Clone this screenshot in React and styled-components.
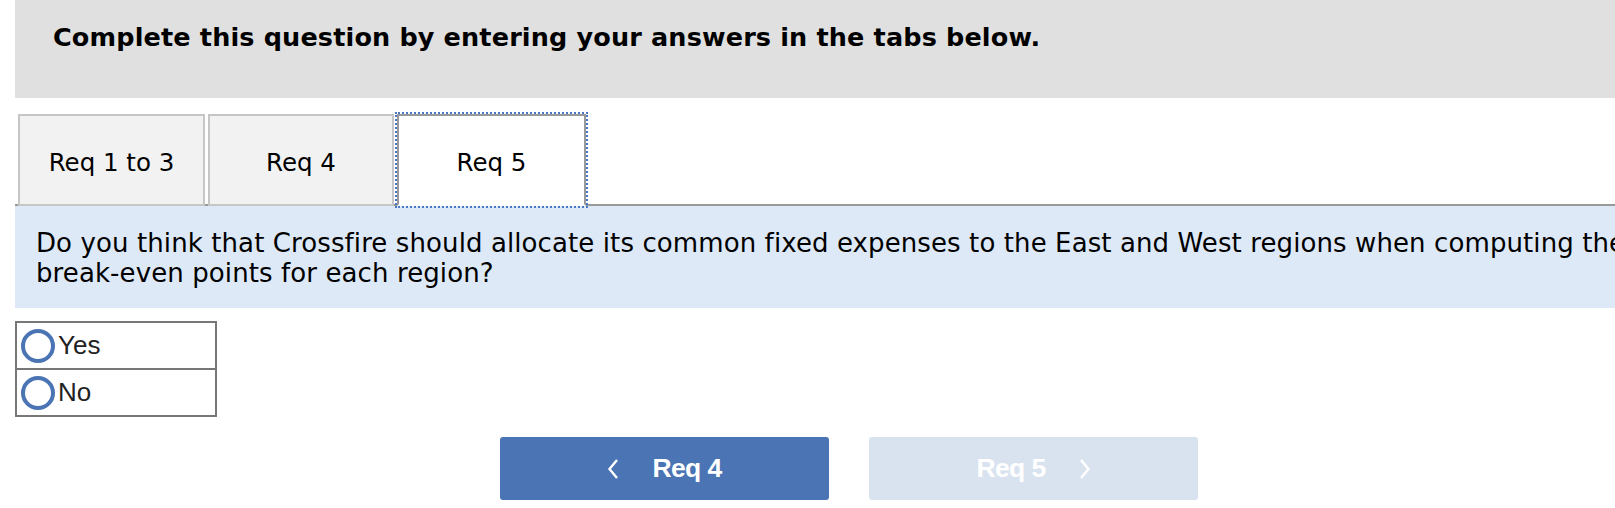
import React, {useState} from 'react';
import styled, {createGlobalStyle} from 'styled-components';

const GlobalStyle = createGlobalStyle`
body {
    margin: 0;
    background: #fff;
    overflow: hidden;
}
`

// the page is wider than the window, the question line runs off the right edge
const Page = styled.main`
width: 1720px;
padding-left: 15px;
`
const Header = styled.header`
background: #e0e0e0;
height: 98px;
padding: 22px 0 0 38px;
box-sizing: border-box;
`
const Title = styled.h1`
margin: 0;
font-family: "DejaVu Sans", Verdana, sans-serif;
font-weight: bold;
font-size: 25.5px;
letter-spacing: 0.15px;
line-height: 30px;
color: #000;
`
const TabBar = styled.div`
display: flex;
gap: 3px;
margin-top: 16px;
padding-left: 3px;
border-bottom: 2px solid #999;
`
const Tab = styled.button`
width: ${p => p.$w}px;
height: 92px;
box-sizing: border-box;
margin: 0 0 -2px 0;
padding: 4px 0 0 0;
background: ${p => p.$active ? '#fff' : '#f2f2f2'};
border: 2px solid ${p => p.$active ? '#999' : '#c6c6c6'};
border-bottom: ${p => p.$active ? '2px solid #fff' : '2px solid #c6c6c6'};
outline: ${p => p.$active ? '2px dotted #4a78c2' : 'none'};
outline-offset: 0;
font-family: "DejaVu Sans", Verdana, sans-serif;
font-size: 24.5px;
color: #000;
cursor: pointer;
`
const Question = styled.div`
background: #dde9f6;
padding: 22px 20px 0 21px;
height: 102px;
box-sizing: border-box;
font-family: "DejaVu Sans", Verdana, sans-serif;
font-size: 26px;
letter-spacing: 0.1px;
line-height: 30px;
color: #000;
`
const Choices = styled.div`
width: 202px;
margin-top: 13px;
border: 2px solid #777;
box-sizing: border-box;
`
const Choice = styled.label`
display: flex;
align-items: center;
height: 45px;
padding-left: 4px;
border-top: ${p => p.$first ? 'none' : '2px solid #777'};
font-family: "Liberation Sans", Arial, sans-serif;
font-size: 26px;
color: #222;
cursor: pointer;
`
const Radio = styled.span`
width: 26px;
height: 26px;
border: 4px solid #4a74b3;
border-radius: 50%;
margin-right: 3px;
background: ${p => p.$on ? 'radial-gradient(#4a74b3 40%, #fff 45%)' : '#fff'};
`
const Nav = styled.div`
display: flex;
gap: 40px;
margin-top: 20px;
padding-left: 485px;
`
const NavButton = styled.button`
width: 329px;
height: 63px;
border: none;
border-radius: 3px;
padding: 0;
background: ${p => p.$disabled ? '#d9e3ef' : '#4a74b3'};
color: #fff;
display: flex;
align-items: center;
justify-content: center;
gap: 33px;
font-family: "Liberation Sans", Arial, sans-serif;
font-weight: bold;
font-size: 26.5px;
letter-spacing: -0.6px;
cursor: ${p => p.$disabled ? 'default' : 'pointer'};
`

function Chevron({dir}) {
    return (
        <svg width="12" height="22" viewBox="0 0 12 22">
            <path d={dir === 'left' ? 'M10 2 L2.5 11 L10 20' : 'M2 2 L9.5 11 L2 20'}
                  fill="none" stroke="#fff" strokeWidth="2.4"/>
        </svg>
    )
}

function App() {
    const [answer, setAnswer] = useState(null)
    const tabs = [['Req 1 to 3', 187], ['Req 4', 186], ['Req 5', 189]]
    return (
        <>
            <GlobalStyle/>
            <Page>
                <Header>
                    <Title>Complete this question by entering your answers in the tabs below.</Title>
                </Header>
                <TabBar>
                    {tabs.map(([label, w], i) => (
                        <Tab key={label} $w={w} $active={i === 2}>{label}</Tab>
                    ))}
                </TabBar>
                <Question>
                    Do you think that Crossfire should allocate its common fixed expenses to the East and West regions when computing the break-even points for each region?
                </Question>
                <Choices>
                    {['Yes', 'No'].map((c, i) => (
                        <Choice key={c} $first={i === 0} onClick={() => setAnswer(c)}>
                            <Radio $on={answer === c}/>{c}
                        </Choice>
                    ))}
                </Choices>
                <Nav>
                    <NavButton><Chevron dir="left"/>Req 4</NavButton>
                    <NavButton $disabled>Req 5<Chevron dir="right"/></NavButton>
                </Nav>
            </Page>
        </>
    );
}

export default App;
